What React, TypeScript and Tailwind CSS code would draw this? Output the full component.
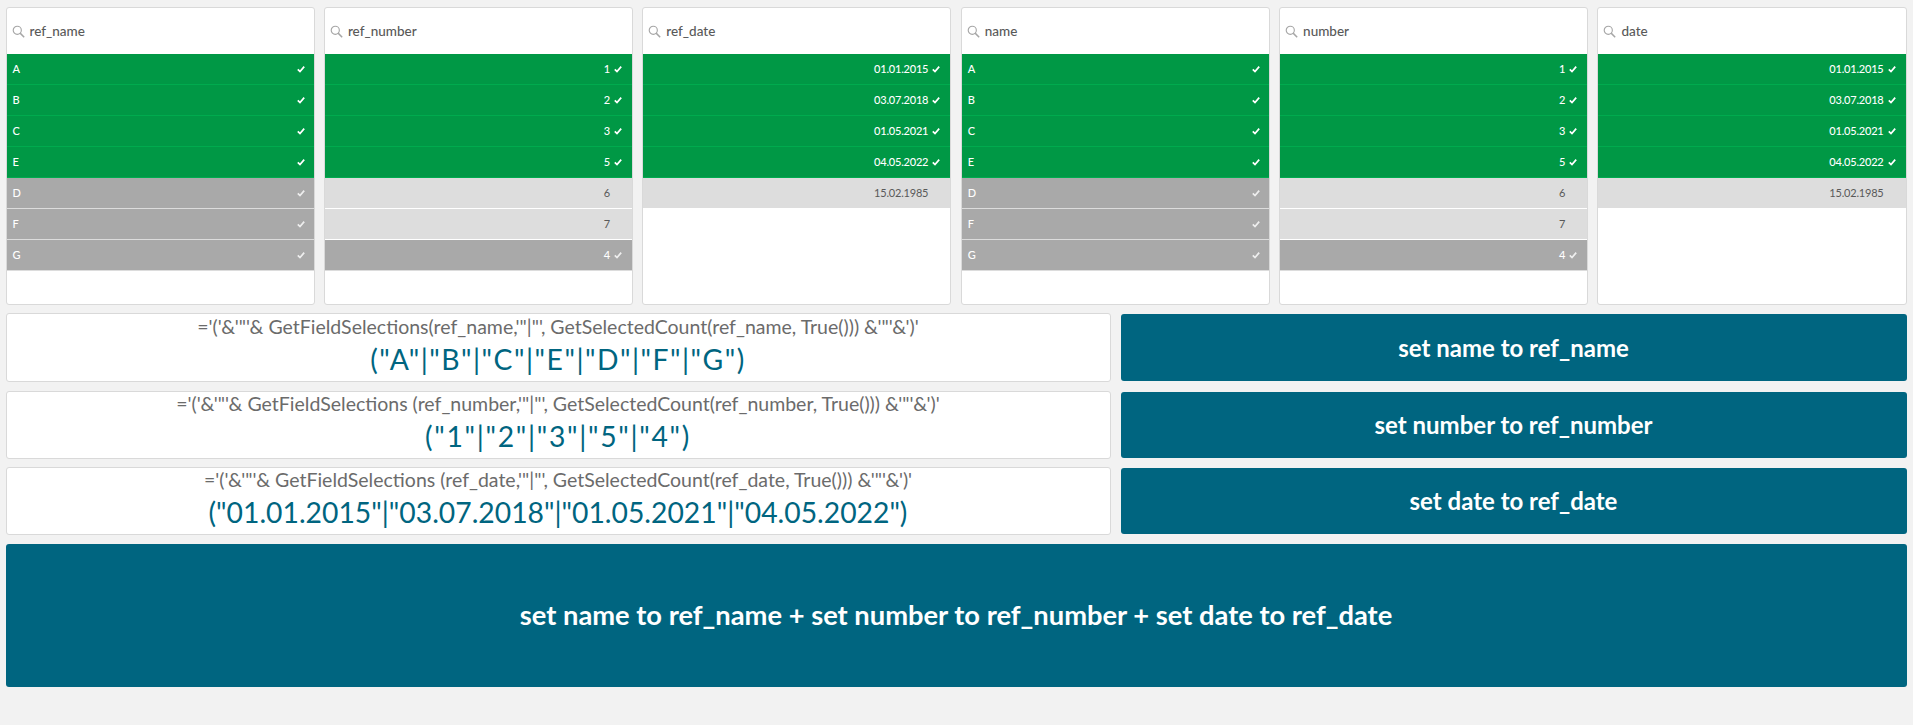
const sans = '[font-family:"Source_Sans_Pro",Lato,"Noto_Sans",sans-serif]';

type Row = { label: string; state: 'on' | 'alt' | 'off'; check?: boolean };

const CheckMark = ({ light }: { light?: boolean }) => (
    <svg viewBox="0 0 12 12" className={`w-[8px] h-[8px] ${light ? 'opacity-80' : ''}`}>
        <path d="M1.2 6.5 4.5 9.8 10.8 2.5" fill="none" stroke="#fff" strokeWidth="2.6" />
    </svg>
);

const SearchIcon = () => (
    <svg viewBox="0 0 16 16" className="w-[13px] h-[13px] shrink-0">
        <circle cx="6.5" cy="6.5" r="5" fill="none" stroke="#a6a6a6" strokeWidth="1.4" />
        <path d="M10 10l5 5" stroke="#a6a6a6" strokeWidth="1.8" />
    </svg>
);

const rowBg = {
    on: 'bg-[#009845] border-[#00ab4e] text-white font-medium',
    alt: 'bg-[#a9a9a9] border-[#dcdcdc] text-white font-medium',
    off: 'bg-[#dddddd] border-white text-[#595959]',
};

const make = (labels: [string, 'on' | 'alt' | 'off'][]): Row[] =>
    labels.map(([label, state]) => ({ label, state, check: state !== 'off' }));

const names = make([['A', 'on'], ['B', 'on'], ['C', 'on'], ['E', 'on'], ['D', 'alt'], ['F', 'alt'], ['G', 'alt']]);
const numbers = make([['1', 'on'], ['2', 'on'], ['3', 'on'], ['5', 'on'], ['6', 'off'], ['7', 'off'], ['4', 'alt']]);
const dates = make([
    ['01.01.2015', 'on'],
    ['03.07.2018', 'on'],
    ['01.05.2021', 'on'],
    ['04.05.2022', 'on'],
    ['15.02.1985', 'off'],
]);

const FilterBox = ({ title, rows, right }: { title: string; rows: Row[]; right?: boolean }) => (
    <div className="h-[298px] bg-white border border-[#d9d9d9] rounded-[3px] overflow-hidden">
        <div className="h-[46px] flex items-center gap-[5px] pl-[5px] text-[13.5px] font-medium text-[#595959]">
            <SearchIcon />
            <span>{title}</span>
        </div>
        {rows.map((r) => (
            <div
                key={r.label}
                className={`h-[31px] border-b flex items-center text-[11px] tracking-[-0.2px] ${rowBg[r.state]} ${right ? 'justify-end pr-[10px]' : 'justify-between pl-[6px] pr-[9px]'}`}
            >
                <span>{r.label}</span>
                {right ? (
                    <span className="w-[12px] flex justify-end">{r.check && <CheckMark light={r.state === 'alt'} />}</span>
                ) : (
                    r.check && <CheckMark light={r.state === 'alt'} />
                )}
            </div>
        ))}
    </div>
);

const Formula = ({ code, value, valueClass }: { code: string; value: string; valueClass?: string }) => (
    <div className="bg-white border border-[#d9d9d9] rounded-[3px] flex flex-col items-center justify-center overflow-hidden">
        <div className="text-[19.5px] leading-[22px] text-[#6b6b6b] whitespace-nowrap">{code}</div>
        <div className={`text-[28.3px] leading-[42px] text-[#006580] whitespace-nowrap ${valueClass ?? ''}`}>{value}</div>
    </div>
);

const ActionButton = ({ label, className }: { label: string; className: string }) => (
    <button className={`bg-[#006580] rounded-[3px] text-white font-bold flex items-center justify-center ${className}`}>
        {label}
    </button>
);

const App = () => {
    return (
        <div className={`h-screen w-full bg-[#f2f2f2] pl-[5.5px] pr-[6.5px] pt-[7px] overflow-hidden ${sans}`}>
            <div className="grid grid-cols-6 gap-[9.4px]">
                <FilterBox title="ref_name" rows={names} />
                <FilterBox title="ref_number" rows={numbers} right />
                <FilterBox title="ref_date" rows={dates} right />
                <FilterBox title="name" rows={names} />
                <FilterBox title="number" rows={numbers} right />
                <FilterBox title="date" rows={dates} right />
            </div>
            <div className="mt-[8px] grid grid-cols-[1105px_1fr] grid-rows-[69px_68px_68px] gap-x-[10px] gap-y-[8.5px]">
                <Formula
                    code={`='('&'"'& GetFieldSelections(ref_name,'"|"', GetSelectedCount(ref_name, True())) &'"'&')'`}
                    value={`("A"|"B"|"C"|"E"|"D"|"F"|"G")`}
                    valueClass="tracking-[1.5px]"
                />
                <ActionButton label="set name to ref_name" className="my-px text-[24px]" />
                <Formula
                    code={`='('&'"'& GetFieldSelections (ref_number,'"|"', GetSelectedCount(ref_number, True())) &'"'&')'`}
                    value={`("1"|"2"|"3"|"5"|"4")`}
                    valueClass="tracking-[1.7px]"
                />
                <ActionButton label="set number to ref_number" className="my-px text-[24px]" />
                <Formula
                    code={`='('&'"'& GetFieldSelections (ref_date,'"|"', GetSelectedCount(ref_date, True())) &'"'&')'`}
                    value={`("01.01.2015"|"03.07.2018"|"01.05.2021"|"04.05.2022")`}
                />
                <ActionButton label="set date to ref_date" className="my-px text-[24px]" />
            </div>
            <div className="mt-[9px] h-[143px] flex">
                <ActionButton
                    label="set name to ref_name + set number to ref_number + set date to ref_date"
                    className="w-full text-[27.3px]"
                />
            </div>
        </div>
    );
};

export default App;
